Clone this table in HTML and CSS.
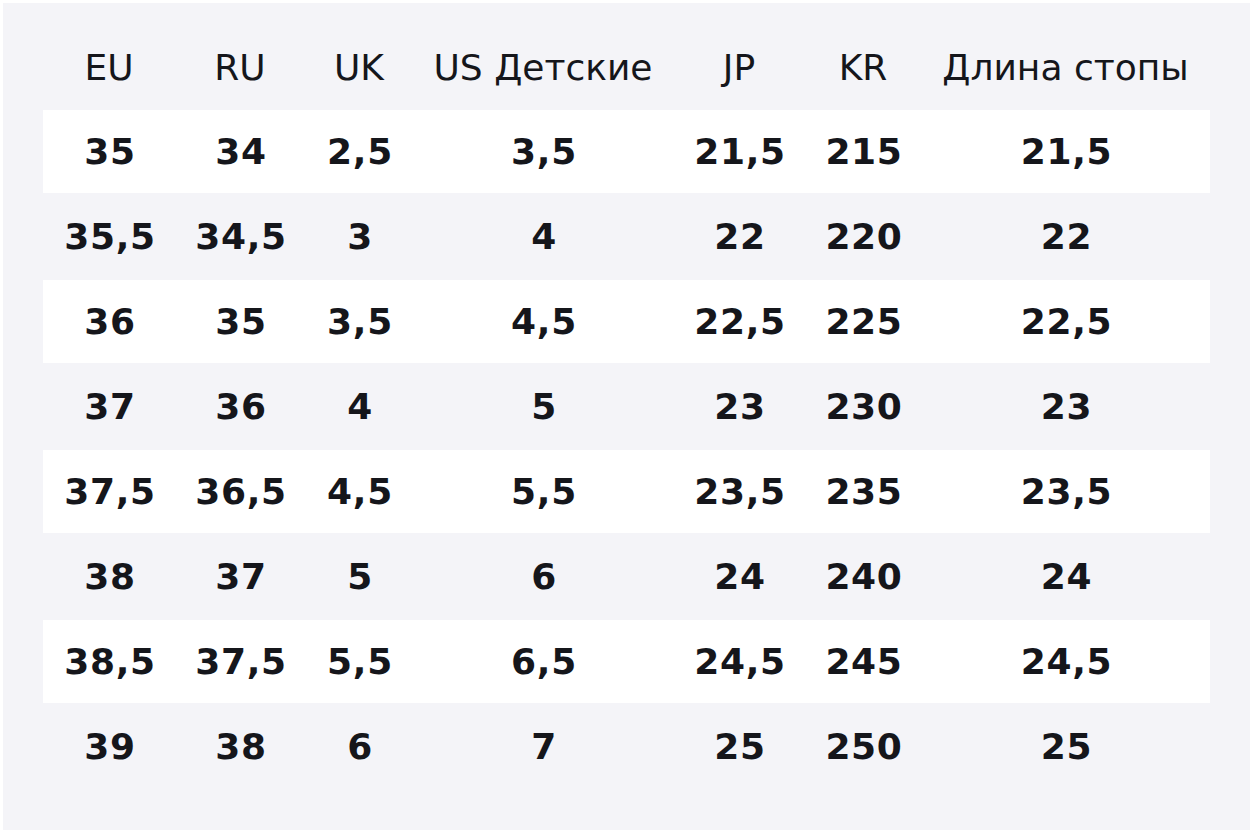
FILE: index.html
```html
<!DOCTYPE html>
<html lang="ru">
<head>
<meta charset="utf-8">
<title>Таблица размеров</title>
<link rel="stylesheet" href="styles.css">
</head>
<body>
<div class="panel">
  <div class="grid">
    <div class="row head"><div>EU</div><div>RU</div><div>UK</div><div>US Детские</div><div>JP</div><div>KR</div><div>Длина стопы</div></div>
    <div class="row odd"><div>35</div><div>34</div><div>2,5</div><div>3,5</div><div>21,5</div><div>215</div><div>21,5</div></div>
    <div class="row even"><div>35,5</div><div>34,5</div><div>3</div><div>4</div><div>22</div><div>220</div><div>22</div></div>
    <div class="row odd"><div>36</div><div>35</div><div>3,5</div><div>4,5</div><div>22,5</div><div>225</div><div>22,5</div></div>
    <div class="row even"><div>37</div><div>36</div><div>4</div><div>5</div><div>23</div><div>230</div><div>23</div></div>
    <div class="row odd"><div>37,5</div><div>36,5</div><div>4,5</div><div>5,5</div><div>23,5</div><div>235</div><div>23,5</div></div>
    <div class="row even"><div>38</div><div>37</div><div>5</div><div>6</div><div>24</div><div>240</div><div>24</div></div>
    <div class="row odd"><div>38,5</div><div>37,5</div><div>5,5</div><div>6,5</div><div>24,5</div><div>245</div><div>24,5</div></div>
    <div class="row even"><div>39</div><div>38</div><div>6</div><div>7</div><div>25</div><div>250</div><div>25</div></div>
  </div>
</div>
</body>
</html>
```

FILE: styles.css
```css
html, body {
  margin: 0;
  padding: 0;
  background: #ffffff;
}
body {
  padding: 3px;
  font-family: "DejaVu Sans", sans-serif;
  color: #15161b;
}
.panel {
  width: 1247px;
  height: 827px;
  box-sizing: border-box;
  padding: 40px;
  background: #f4f4f8;
}
.grid {
  display: flex;
  flex-direction: column;
}
.row {
  display: grid;
  grid-template-columns: 132px 130px 108px 260px 132px 116px 289px;
  text-align: center;
  font-size: 36px;
  white-space: nowrap;
}
.head {
  height: 67px;
  padding-top: 4px;
  box-sizing: border-box;
  line-height: 42px;
  font-weight: normal;
}
.odd,
.even {
  font-weight: bold;
  letter-spacing: 0.7px;
  padding-left: 1px;
}
.odd {
  height: 83px;
  line-height: 83px;
  background: #ffffff;
}
.even {
  height: 87px;
  line-height: 87px;
}
```
